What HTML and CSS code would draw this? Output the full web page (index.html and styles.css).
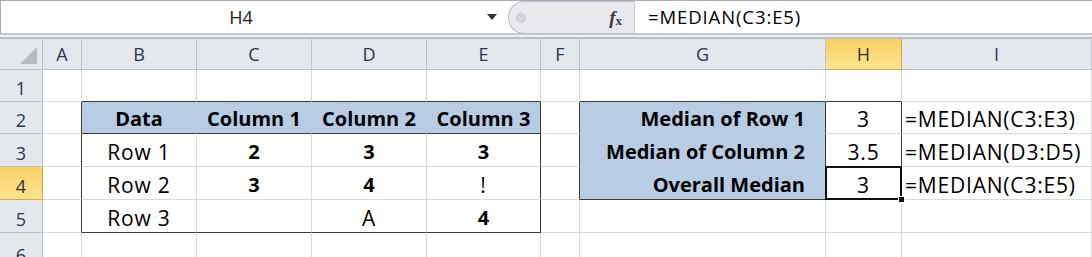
FILE: index.html
```html
<!DOCTYPE html>
<html lang="en">
<head>
  <meta charset="UTF-8">
  <title>MEDIAN example</title>
  <link rel="stylesheet" href="styles.css">
</head>
<body>

<div class="formula-bar">
  <div class="name-box">
    <span class="name">H4</span>
    <span class="drop"></span>
  </div>
  <div class="fx-zone">
    <span class="knob"></span>
    <span class="fx"><i>f</i><sub>x</sub></span>
  </div>
  <div class="formula">=MEDIAN(C3:E5)</div>
</div>
<div class="bar-gap"></div>

<div class="sheet">
  <!-- column headers -->
  <div class="hd corner"><span class="tri"></span></div>
  <div class="hd">A</div>
  <div class="hd">B</div>
  <div class="hd">C</div>
  <div class="hd">D</div>
  <div class="hd">E</div>
  <div class="hd">F</div>
  <div class="hd">G</div>
  <div class="hd on">H</div>
  <div class="hd">I</div>

  <!-- row 1 -->
  <div class="rh">1</div>
  <div class="c"></div>
  <div class="c bb"></div>
  <div class="c bb"></div>
  <div class="c bb"></div>
  <div class="c bb"></div>
  <div class="c"></div>
  <div class="c bb"></div>
  <div class="c bb"></div>
  <div class="c"></div>

  <!-- row 2 -->
  <div class="rh">2</div>
  <div class="c br"></div>
  <div class="c fill head bb">Data</div>
  <div class="c fill head bb">Column 1</div>
  <div class="c fill head bb">Column 2</div>
  <div class="c fill head bb br">Column 3</div>
  <div class="c br"></div>
  <div class="c fill label br">Median of Row 1</div>
  <div class="c num br">3</div>
  <div class="c text">=MEDIAN(C3:E3)</div>

  <!-- row 3 -->
  <div class="rh">3</div>
  <div class="c br"></div>
  <div class="c mid">Row 1</div>
  <div class="c mid b">2</div>
  <div class="c mid b">3</div>
  <div class="c mid b br">3</div>
  <div class="c br"></div>
  <div class="c fill label br">Median of Column 2</div>
  <div class="c num br">3.5</div>
  <div class="c text">=MEDIAN(D3:D5)</div>

  <!-- row 4 -->
  <div class="rh on">4</div>
  <div class="c br"></div>
  <div class="c mid">Row 2</div>
  <div class="c mid b">3</div>
  <div class="c mid b">4</div>
  <div class="c mid br">!</div>
  <div class="c br"></div>
  <div class="c fill label br bb last">Overall Median</div>
  <div class="c num br bb sel">3<span class="handle"></span></div>
  <div class="c text">=MEDIAN(C3:E5)</div>

  <!-- row 5 -->
  <div class="rh">5</div>
  <div class="c br"></div>
  <div class="c mid bb">Row 3</div>
  <div class="c mid bb"></div>
  <div class="c mid bb">A</div>
  <div class="c mid b bb br">4</div>
  <div class="c"></div>
  <div class="c"></div>
  <div class="c"></div>
  <div class="c"></div>

  <!-- row 6 -->
  <div class="rh">6</div>
  <div class="c"></div>
  <div class="c"></div>
  <div class="c"></div>
  <div class="c"></div>
  <div class="c"></div>
  <div class="c"></div>
  <div class="c"></div>
  <div class="c"></div>
  <div class="c"></div>
</div>

</body>
</html>
```

FILE: styles.css
```css
:root {
  --grid: #d9d9d9;
  --edge: #3c3c3c;
  --fill: #b8cce4;
  --head-bg: #e4e7eb;
  --head-line: #bcc2ca;
  --head-text: #28384f;
}

* {
  box-sizing: border-box;
}

body {
  margin: 0;
  width: 1092px;
  height: 257px;
  overflow: hidden;
  background: #fff;
  font-family: "Open Sans", Lato, sans-serif;
  color: #000;
}

/* formula bar */
.formula-bar {
  display: flex;
  height: 33px;
  border-top: 1px solid #a7adb5;
  border-left: 1px solid #a7adb5;
}

.name-box {
  width: 507px;
  display: flex;
  align-items: center;
}

.name {
  width: 480px;
  text-align: center;
  font-size: 18px;
  color: #222;
}

.drop {
  margin-left: 6px;
  border-left: 5px solid transparent;
  border-right: 5px solid transparent;
  border-top: 6px solid #333;
}

.fx-zone {
  width: 127px;
  display: flex;
  align-items: center;
  justify-content: space-between;
  padding: 0 12px 0 7px;
  background: #e7e9ed;
  border: 1px solid #b9bec6;
  border-right-color: #c9cdd3;
  border-radius: 16px 0 0 16px;
  margin-bottom: -1px;
}

.knob {
  width: 10px;
  height: 10px;
  border-radius: 50%;
  background: #d3d6db;
  border: 1px solid #c6cad0;
}

.fx {
  font-family: "Liberation Serif", serif;
  font-weight: bold;
  font-size: 19px;
  color: #3a3a3a;
}

.fx sub {
  font-size: 13px;
  vertical-align: -1px;
}

.formula {
  flex: 1;
  padding: 3px 0 0 13px;
  font-size: 18.5px;
  letter-spacing: 0.9px;
}

.bar-gap {
  height: 6px;
  border-top: 2px solid #c3c6d2;
  border-bottom: 2px solid #b9bdc4;
  background: #eef0f3;
}

/* sheet grid */
.sheet {
  display: grid;
  grid-template-columns: 43px 39px 115px 115px 115px 114px 39px 246px 76px 190px;
  grid-template-rows: 31px 32px 32px 33px 33px 33px 40px;
}

.hd,
.rh {
  background: var(--head-bg);
  color: var(--head-text);
  border-right: 1px solid var(--head-line);
  border-bottom: 1px solid var(--head-line);
  display: flex;
  align-items: center;
  justify-content: center;
  font-size: 18px;
}

.rh {
  padding-top: 5px;
}

.corner {
  position: relative;
}

.tri {
  position: absolute;
  right: 5px;
  bottom: 5px;
  border-left: 17px solid transparent;
  border-bottom: 17px solid #b7bbc1;
}

.hd.on,
.rh.on {
  background: linear-gradient(#f8cf64, #fde58f);
  border-color: #e0a740;
  color: #333;
}

.c {
  border-right: 1px solid var(--grid);
  border-bottom: 1px solid var(--grid);
  display: flex;
  align-items: flex-end;
  padding-bottom: 2px;
  font-size: 21px;
  letter-spacing: 0.8px;
  line-height: 24px;
  white-space: nowrap;
}

.br {
  border-right-color: var(--edge);
}

.bb {
  border-bottom-color: var(--edge);
}

.fill {
  background: var(--fill);
  border-bottom-color: var(--fill);
}

.fill.head {
  border-right-color: var(--fill);
  border-bottom-color: var(--edge);
  justify-content: center;
}

.fill.head.br {
  border-right-color: var(--edge);
}

.head,
.label,
.b {
  font-size: 20px;
  font-weight: bold;
  letter-spacing: 0;
}

.label {
  justify-content: flex-end;
  padding-right: 20px;
}

.label.last {
  border-bottom-color: var(--edge);
}

.mid,
.num {
  justify-content: center;
}

.text {
  padding-left: 3px;
}

.sel {
  position: relative;
}

.sel::after {
  content: "";
  position: absolute;
  left: -1px;
  top: -1px;
  right: -1px;
  bottom: -1px;
  border: 2px solid #111;
}

.handle {
  position: absolute;
  right: -4px;
  bottom: -4px;
  width: 7px;
  height: 7px;
  background: #111;
  border: 1px solid #fff;
  z-index: 1;
}
```
